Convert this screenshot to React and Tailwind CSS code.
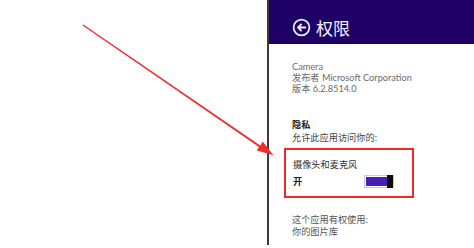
export default function App() {
  const font = { fontFamily: '"Noto Sans CJK SC", "Noto Sans", sans-serif' };
  const small = { fontFamily: 'Lato, "Noto Sans CJK SC", sans-serif' };

  return (
    <div className="relative flex h-[248px] w-[474px] overflow-hidden bg-white" style={font}>
      {/* left empty area */}
      <div className="w-[267px] shrink-0" />

      {/* permissions pane */}
      <div className="flex w-[207px] shrink-0 flex-col border-l-2 border-[#3b3b3b] mb-[3px]">
        <div className="flex h-[44px] items-center gap-[5px] bg-[#1f0066] pl-[23px] pt-[11px]">
          <svg width="19" height="19" viewBox="0 0 20 20" fill="none">
            <circle cx="10" cy="10" r="8.3" stroke="#f2f0fa" strokeWidth="1.8" />
            <path d="M14 10H6.6M9.6 6.8L6.4 10l3.2 3.2" stroke="#f2f0fa" strokeWidth="1.9" strokeLinecap="round" strokeLinejoin="round" />
          </svg>
          <span className="text-[17px] leading-none text-[#f4f2fb]">权限</span>
        </div>

        <div className="flex flex-col pl-[23px] pt-[17px] text-[9.2px] leading-[11px] text-[#6b6b6b]" style={small}>
          <div>Camera</div>
          <div>发布者 Microsoft Corporation</div>
          <div>版本 6.2.8514.0</div>

          <div className="mt-[25px] font-bold text-[#222]">隐私</div>
          <div className="mt-[2px] text-[#444]">允许此应用访问你的:</div>

          <div className="-ml-[8px] mt-[5px] h-[50px] w-[130px] border-2 border-[#ee2b2b] pl-[7px] pt-[9px]">
            <div className="text-[#333]">摄像头和麦克风</div>
            <div className="mt-[5px] flex items-center">
              <span className="font-bold text-[#222]">开</span>
              <div className="ml-[62px] flex h-[13px] w-[30px] items-center border border-[#cfc4ef] pl-[1px]">
                <div className="h-[9px] w-[22px] bg-[#4a1fb5]" />
                <div className="h-[13px] w-[6px] bg-[#0a0a0a]" />
              </div>
            </div>
          </div>

          <div className="mt-[16px] text-[#555]">这个应用有权使用:</div>
          <div className="mt-[1px] text-[#555]">你的图片库</div>
        </div>
      </div>

      {/* annotation arrow */}
      <svg className="pointer-events-none absolute left-0 top-0" width="474" height="248" viewBox="0 0 474 248">
        <polygon
          points="82.6,25.5 83.4,24.5 260.3,145.6 262.8,141.6 273.5,155.3 256.8,150.5 258.9,146.9"
          fill="#ef2f2f"
        />
      </svg>
    </div>
  );
}
